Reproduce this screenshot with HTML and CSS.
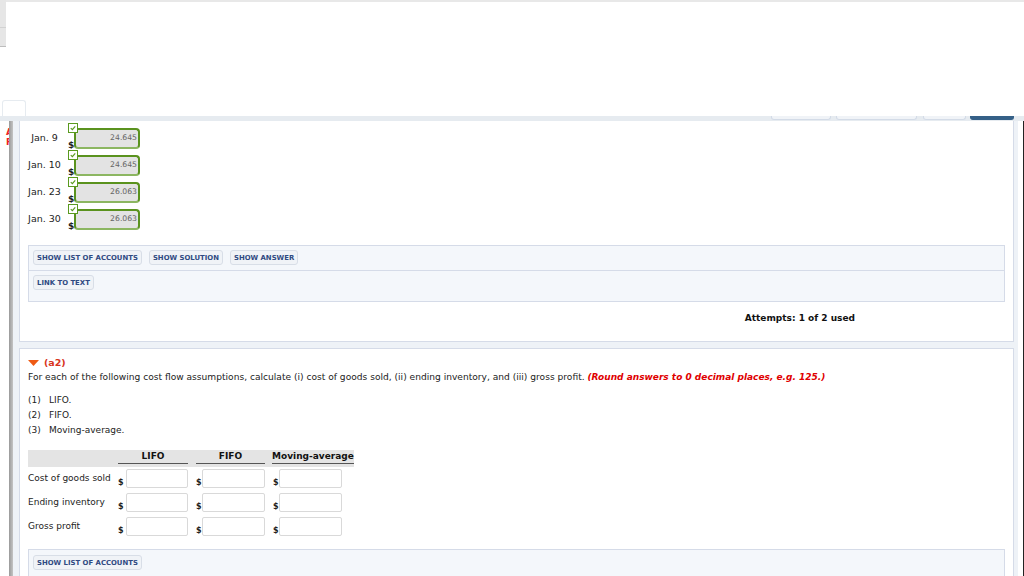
FILE: index.html
```html
<!DOCTYPE html>
<html lang="en">
<head>
<meta charset="utf-8">
<title>Inventory question</title>
<link rel="stylesheet" href="styles.css">
</head>
<body>
<div class="page">
  <header class="top">
    <div class="top-area">
      <div class="corner"></div>
      <div class="tab"></div>
    </div>
    <div class="strip">
      <span class="stub stub-a"></span>
      <span class="stub stub-b"></span>
      <span class="stub stub-c"></span>
      <span class="stub stub-d"></span>
    </div>
  </header>
  <div class="main">
    <div class="gutter"><span>A</span><span>F</span></div>
    <div class="rail"></div>
    <div class="content">
      <section class="card card-one">
        <div class="answers">
          <div class="answer"><span class="date">Jan. 9</span><span class="cur">$</span><span class="check"><svg viewBox="0 0 10 10"><path d="M2.2 5.2 4.2 7 7.8 3"/></svg></span><span class="value">24.645</span></div>
          <div class="answer"><span class="date">Jan. 10</span><span class="cur">$</span><span class="check"><svg viewBox="0 0 10 10"><path d="M2.2 5.2 4.2 7 7.8 3"/></svg></span><span class="value">24.645</span></div>
          <div class="answer"><span class="date">Jan. 23</span><span class="cur">$</span><span class="check"><svg viewBox="0 0 10 10"><path d="M2.2 5.2 4.2 7 7.8 3"/></svg></span><span class="value">26.063</span></div>
          <div class="answer"><span class="date">Jan. 30</span><span class="cur">$</span><span class="check"><svg viewBox="0 0 10 10"><path d="M2.2 5.2 4.2 7 7.8 3"/></svg></span><span class="value">26.063</span></div>
        </div>
        <div class="panel">
          <div class="panel-row">
            <a class="btn">SHOW LIST OF ACCOUNTS</a>
            <a class="btn">SHOW SOLUTION</a>
            <a class="btn">SHOW ANSWER</a>
          </div>
          <div class="panel-row panel-row-tall">
            <a class="btn">LINK TO TEXT</a>
          </div>
        </div>
        <p class="attempts">Attempts: 1 of 2 used</p>
      </section>
      <section class="card card-two">
        <h2 class="part"><svg class="tri" viewBox="0 0 11 6"><path d="M0 0H11L5.5 6Z"/></svg>(a2)</h2>
        <p class="prompt">For each of the following cost flow assumptions, calculate (i) cost of goods sold, (ii) ending inventory, and (iii) gross profit. <em class="hint">(Round answers to 0 decimal places, e.g. 125.)</em></p>
        <ol class="methods">
          <li><span>(1)</span>LIFO.</li>
          <li><span>(2)</span>FIFO.</li>
          <li><span>(3)</span>Moving-average.</li>
        </ol>
        <div class="grid">
          <div class="head">
            <span class="head-label"></span>
            <span class="col col-a">LIFO</span>
            <span class="col col-b">FIFO</span>
            <span class="col col-c">Moving-average</span>
          </div>
          <div class="line">
            <span class="line-label">Cost of goods sold</span>
            <span class="money m-a">$<i class="box"></i></span>
            <span class="money m-b">$<i class="box"></i></span>
            <span class="money m-c">$<i class="box"></i></span>
          </div>
          <div class="line">
            <span class="line-label">Ending inventory</span>
            <span class="money m-a">$<i class="box"></i></span>
            <span class="money m-b">$<i class="box"></i></span>
            <span class="money m-c">$<i class="box"></i></span>
          </div>
          <div class="line">
            <span class="line-label">Gross profit</span>
            <span class="money m-a">$<i class="box"></i></span>
            <span class="money m-b">$<i class="box"></i></span>
            <span class="money m-c">$<i class="box"></i></span>
          </div>
        </div>
        <div class="panel panel-low">
          <div class="panel-row">
            <a class="btn">SHOW LIST OF ACCOUNTS</a>
          </div>
        </div>
      </section>
    </div>
    <div class="edge"></div>
  </div>
</div>
</body>
</html>
```
FILE: styles.css
```css
* { box-sizing: border-box; }
html, body { margin: 0; padding: 0; }
body { background: #fff; font-family: "DejaVu Sans", Verdana, sans-serif; color: #222; }
.page { width: 1024px; height: 576px; overflow: hidden; display: flex; flex-direction: column; }

.top { flex: none; }
.top-area { height: 116px; border-top: 2px solid #e8e8e8; position: relative; background: #fff; }
.corner { position: absolute; left: 0; top: -2px; width: 6px; height: 47px; background: #e6e6e6; border-bottom: 1px solid #bdbdbd; }
.corner::after { content: ""; position: absolute; left: 0; right: 0; top: 27px; height: 1px; background: #d2d2d2; }
.tab { position: absolute; left: 2px; top: 98px; width: 24px; height: 18px; border: 1px solid #e6ebf0; border-bottom: 0; border-radius: 3px 3px 0 0; }
.strip { height: 5px; background: #e6ebf0; display: flex; position: relative; }
.stub { position: absolute; top: 0; height: 4px; background: #f0f3f7; border: 1px solid #d3dbe7; border-top: 0; border-radius: 0 0 3px 3px; }
.stub-a { left: 771px; width: 60px; }
.stub-b { left: 836px; width: 81px; }
.stub-c { left: 923px; width: 43px; }
.stub-d { left: 970px; width: 44px; background: #356087; border-color: #356087; }

.main { flex: 1; display: flex; min-height: 0; }
.gutter { width: 9px; flex: none; display: flex; flex-direction: column; padding-top: 6px; overflow: hidden; font-size: 9px; line-height: 10px; font-weight: bold; color: #e22; }
.gutter span { margin-left: 6px; }
.rail { width: 4px; flex: none; background: linear-gradient(90deg, #999, #c4c4c4); }
.content { width: 1001px; flex: none; background: #eef2f7; padding-left: 6px; overflow: hidden; }
.edge { flex: 1; background: linear-gradient(90deg, #eef2f7 0 4px, #fff 4px 9px, #222 9px); }

.card { width: 995px; background: #fff; border: 1px solid #d5dbe8; }
.card-one { height: 221px; border-top: 0; padding: 8px 8px 0; }
.card-two { height: 240px; margin-top: 6px; padding: 7px 8px 0; }

.answers { display: flex; flex-direction: column; }
.answer { height: 27px; display: flex; align-items: flex-start; position: relative; font-size: 9.5px; }
.date { width: 33px; margin-top: 3px; line-height: 11px; color: #222; text-align: center; white-space: nowrap; }
.cur { position: absolute; left: 40px; top: 11px; font-size: 9px; line-height: 11px; font-weight: bold; }
.check { position: absolute; left: 40px; top: -6px; width: 10px; height: 10px; background: #fff; border: 1px solid #5a9a1f; z-index: 1; display: flex; }
.check svg { width: 8px; height: 8px; fill: none; stroke: #5a9a1f; stroke-width: 1.5; }
.value { position: absolute; left: 46px; top: -1px; width: 66px; height: 21px; background: #e3e3e3; border: 2px solid #5a921e; border-bottom-color: #8cb661; border-radius: 4px; font-size: 7.7px; line-height: 16px; color: #666; text-align: right; padding-right: 1px; }

.panel { width: 977px; background: #f4f7fb; border: 1px solid #d5dbe8; margin-top: 8px; }
.panel-row { height: 24px; padding: 4px 4px 0; display: flex; gap: 7px; }
.panel-row-tall { height: 31px; border-top: 1px solid #d5dbe8; }
.btn { height: 15px; padding: 0 3px; background: #f0f3f7; border: 1px solid #d8dee7; border-radius: 3px; font-size: 6.9px; line-height: 15px; font-weight: bold; color: #2f4a82; white-space: nowrap; }

.attempts { margin: 11px 0 0; padding-right: 150px; text-align: right; font-size: 9px; line-height: 11px; font-weight: bold; color: #111; }

.part { margin: 0; height: 13px; font-size: 9.5px; line-height: 13px; font-weight: bold; color: #d8341c; display: flex; align-items: center; }
.tri { width: 11px; height: 6px; margin-right: 5px; fill: #ee5a14; }
.prompt { margin: 2px 0 0; font-size: 9.11px; line-height: 13px; color: #222; white-space: nowrap; }
.hint { font-size: 9px; font-weight: bold; color: #e00000; font-style: italic; }
.methods { list-style: none; margin: 9px 0 0; padding: 0; font-size: 9px; line-height: 15px; }
.methods span { display: inline-block; width: 21px; }

.grid { margin-top: 12px; width: 326px; }
.head { height: 17px; background: #e4e4e4; position: relative; font-size: 9px; font-weight: bold; line-height: 12px; color: #111; }
.col { position: absolute; top: 0; height: 14px; text-align: center; border-bottom: 1px solid #555; white-space: nowrap; }
.col-a { left: 90px; width: 70px; }
.col-b { left: 168px; width: 69px; }
.col-c { left: 244px; width: 82px; }
.line { height: 24px; position: relative; font-size: 9px; }
.line-label { position: absolute; left: 0; top: 6px; line-height: 11px; color: #222; white-space: nowrap; }
.money { position: absolute; top: 10px; font-weight: bold; font-size: 8px; line-height: 11px; color: #222; }
.box { position: absolute; top: -8px; height: 19px; background: #fff; border: 1px solid #d9d9d9; border-radius: 2px; }
.m-a { left: 90px; }
.m-b { left: 168px; }
.m-c { left: 245px; }
.m-a .box { left: 8px; width: 62px; }
.m-b .box { left: 6px; width: 63px; }
.m-c .box { left: 6px; width: 63px; }
.panel-low { margin-top: 10px; height: 30px; }
.panel-low .panel-row { padding-top: 5px; }
```
